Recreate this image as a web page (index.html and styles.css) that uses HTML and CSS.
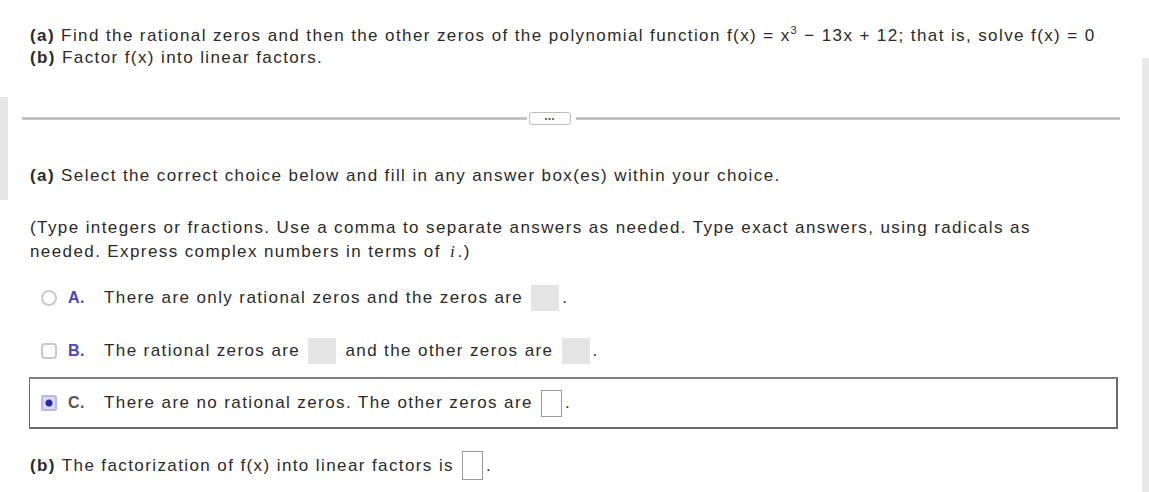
FILE: index.html
```html
<!DOCTYPE html>
<html>
<head>
<meta charset="utf-8">
<link rel="stylesheet" href="styles.css">
</head>
<body>
<div class="page">
  <div class="leftrail"><div class="railblock"></div></div>
  <div class="main">
    <div class="question">
      <div class="qline"><b>(a)</b> Find the rational zeros and then the other zeros of the polynomial function f(x) = x<sup>3</sup> − 13x + 12; that is, solve f(x) = 0</div>
      <div class="qline"><b>(b)</b> Factor f(x) into linear factors.</div>
    </div>
    <div class="divider">
      <div class="rule left"></div>
      <div class="dots"><span>•••</span></div>
      <div class="rule"></div>
    </div>
    <div class="answer">
      <div class="instr"><b>(a)</b> Select the correct choice below and fill in any answer box(es) within your choice.</div>
      <div class="hint">(Type integers or fractions. Use a comma to separate answers as needed. Type exact answers, using radicals as needed. Express complex numbers in terms of <i>i</i>.)</div>
      <div class="choices">
        <div class="choice">
          <span class="radio"></span><span class="letter blue">A.</span>
          <span class="ctext">There are only rational zeros and the zeros are <span class="box gray"></span>.</span>
        </div>
        <div class="choice">
          <span class="radio sq"></span><span class="letter blue">B.</span>
          <span class="ctext">The rational zeros are <span class="box gray"></span> and the other zeros are <span class="box gray"></span>.</span>
        </div>
        <div class="choice selected">
          <span class="radio on"></span><span class="letter">C.</span>
          <span class="ctext">There are no rational zeros. The other zeros are <span class="box white"></span>.</span>
        </div>
      </div>
      <div class="partb"><b>(b)</b> The factorization of f(x) into linear factors is <span class="box white tall"></span>.</div>
    </div>
  </div>
  <div class="rightrail"></div>
</div>
</body>
</html>
```

FILE: styles.css
```css
html, body {
  margin: 0;
  padding: 0;
  background: #fff;
}
body {
  font-family: "Liberation Sans", Arial, sans-serif;
  font-size: 17px;
  letter-spacing: 1.4px;
  color: #2a2a2a;
}
.page {
  display: flex;
  width: 1149px;
  height: 492px;
  overflow: hidden;
}
.leftrail {
  width: 8px;
  flex: none;
}
.railblock {
  margin-top: 97px;
  height: 103px;
  background: #e6e6e6;
}
.main {
  flex: 1;
  padding: 0 0 0 22px;
}
.rightrail {
  width: 7px;
  flex: none;
  margin-top: 58px;
  background: #e8e8e8;
}
.question {
  padding-top: 25px;
}
.qline {
  line-height: 22px;
  white-space: nowrap;
}
.qline sup {
  font-size: 11px;
  line-height: 0;
  vertical-align: 7px;
}
.divider {
  display: flex;
  align-items: center;
  margin-top: 42px;
  margin-left: -8px;
  width: 1098px;
  height: 14px;
}
.rule {
  flex: 1;
  height: 3px;
  background: #c4c4c4;
}
.rule.left {
  flex: none;
  width: 505px;
}
.dots {
  width: 40px;
  height: 11px;
  border: 1px solid #bdbdbd;
  border-radius: 3px;
  display: flex;
  align-items: center;
  justify-content: center;
  font-size: 7px;
  letter-spacing: 1px;
  color: #444;
  margin: 0 5px 0 2px;
}
.answer {
  padding-top: 40px;
}
.instr {
  line-height: 22px;
}
.hint {
  margin-top: 29px;
  line-height: 24px;
  width: 1030px;
}
.hint i {
  font-family: "Liberation Serif", serif;
  letter-spacing: 0;
  margin: 0 3px;
}
.choices {
  margin-top: 7px;
}
.choice {
  display: flex;
  align-items: center;
  height: 53px;
  padding-left: 11px;
  width: 1075px;
}
.choice.selected {
  height: 48px;
  border: 2px solid #6b6b6b;
  border-left-width: 1px;
  border-top-color: #808080;
  margin-left: -1px;
}
.radio {
  width: 16px;
  height: 16px;
  border: 2px solid #c9c9c9;
  border-radius: 50%;
  box-sizing: border-box;
  flex: none;
}
.radio.sq {
  border-radius: 4px;
}
.radio.on {
  border-radius: 2px;
  border: 2px solid #b9b9e6;
  background: radial-gradient(circle, #2a2aa0 0 3px, #d8d8f4 4px);
}
.letter {
  font-weight: bold;
  font-size: 16px;
  letter-spacing: 0.5px;
  color: #555;
  width: 36px;
  margin-left: 11px;
  flex: none;
}
.letter.blue {
  color: #4a48b8;
}
.ctext {
  display: flex;
  align-items: center;
  white-space: pre;
}
.box {
  display: inline-block;
  width: 28px;
  height: 26px;
  margin: 0 3px 0 2px;
  box-sizing: border-box;
}
.box.gray {
  background: #e4e4e4;
}
.box.white {
  width: 21px;
  height: 27px;
  border: 1px solid #9a9a9a;
  background: #fff;
}
.box.tall {
  height: 29px;
}
.partb {
  margin-top: 22px;
  display: flex;
  align-items: center;
  white-space: pre;
}
```
